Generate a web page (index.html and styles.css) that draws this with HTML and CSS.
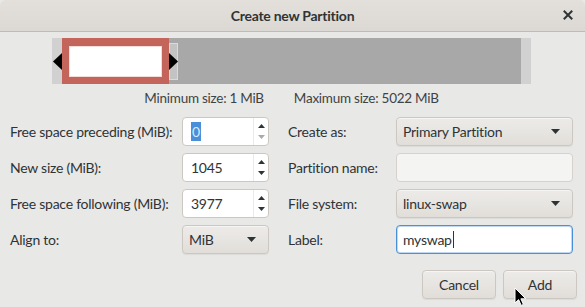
FILE: index.html
```html
<!DOCTYPE html>
<html lang="en">
<head>
<meta charset="utf-8">
<title>Create new Partition</title>
<link rel="stylesheet" href="styles.css">
</head>
<body>
<div class="window">
  <header class="titlebar">
    <span class="title">Create new Partition</span>
    <span class="close">
      <svg width="10" height="10" viewBox="0 0 10 10"><path d="M1.5 1.5 L8.5 8.5 M8.5 1.5 L1.5 8.5" stroke="#2e3436" stroke-width="2" stroke-linecap="square"/></svg>
    </span>
  </header>
  <main class="content">
    <div class="partbar">
      <div class="pb-edge"></div>
      <div class="pb-part"></div>
      <div class="pb-rest"></div>
      <div class="pb-edge pb-edge-right"></div>
      <div class="pb-handle"></div>
      <svg class="pb-arrow pb-arrow-left" width="9" height="17" viewBox="0 0 9 17"><path d="M9 0 L0 8.5 L9 17 Z" fill="#000"/></svg>
      <svg class="pb-arrow pb-arrow-right" width="9" height="17" viewBox="0 0 9 17"><path d="M0 0 L9 8.5 L0 17 Z" fill="#000"/></svg>
    </div>
    <div class="sizes">
      <span>Minimum size: 1 MiB</span>
      <span>Maximum size: 5022 MiB</span>
    </div>
    <div class="form">
      <label class="lbl">Free space preceding (MiB):</label>
      <div class="spin">
        <span class="spin-text"><span class="sel">0</span></span>
        <span class="spin-btns">
          <svg width="7" height="4" viewBox="0 0 7 4"><path d="M0 4 L3.5 0 L7 4 Z" fill="#2e3436"/></svg>
          <svg width="7" height="4" viewBox="0 0 7 4"><path d="M0 0 L3.5 4 L7 0 Z" fill="#a9abab"/></svg>
        </span>
      </div>
      <span class="gap"></span>
      <label class="lbl">Create as:</label>
      <div class="combo"><span>Primary Partition</span><svg width="9" height="5" viewBox="0 0 9 5"><path d="M0 0 L4.5 5 L9 0 Z" fill="#2e3436"/></svg></div>

      <label class="lbl">New size (MiB):</label>
      <div class="spin">
        <span class="spin-text">1045</span>
        <span class="spin-btns">
          <svg width="7" height="4" viewBox="0 0 7 4"><path d="M0 4 L3.5 0 L7 4 Z" fill="#2e3436"/></svg>
          <svg width="7" height="4" viewBox="0 0 7 4"><path d="M0 0 L3.5 4 L7 0 Z" fill="#2e3436"/></svg>
        </span>
      </div>
      <span class="gap"></span>
      <label class="lbl">Partition name:</label>
      <div class="entry entry-disabled"></div>

      <label class="lbl">Free space following (MiB):</label>
      <div class="spin">
        <span class="spin-text">3977</span>
        <span class="spin-btns">
          <svg width="7" height="4" viewBox="0 0 7 4"><path d="M0 4 L3.5 0 L7 4 Z" fill="#2e3436"/></svg>
          <svg width="7" height="4" viewBox="0 0 7 4"><path d="M0 0 L3.5 4 L7 0 Z" fill="#2e3436"/></svg>
        </span>
      </div>
      <span class="gap"></span>
      <label class="lbl">File system:</label>
      <div class="combo"><span>linux-swap</span><svg width="9" height="5" viewBox="0 0 9 5"><path d="M0 0 L4.5 5 L9 0 Z" fill="#2e3436"/></svg></div>

      <label class="lbl">Align to:</label>
      <div class="combo combo-small"><span>MiB</span><svg width="9" height="5" viewBox="0 0 9 5"><path d="M0 0 L4.5 5 L9 0 Z" fill="#2e3436"/></svg></div>
      <span class="gap"></span>
      <label class="lbl">Label:</label>
      <div class="entry entry-focus"><span>myswap</span><span class="caret"></span></div>
    </div>
    <div class="buttons">
      <button class="btn">Cancel</button>
      <button class="btn">Add</button>
    </div>
  </main>
  <svg class="pointer" width="13" height="20" viewBox="0 0 13 20"><path d="M1 1 L1 16 L4.6 12.6 L7.2 18.4 L9.4 17.4 L6.9 11.8 L11.8 11.8 Z" fill="#000" stroke="#fff" stroke-width="1" stroke-linejoin="round"/></svg>
</div>
</body>
</html>
```
FILE: styles.css
```css
html, body {
  margin: 0;
  padding: 0;
  background: #e8e8e7;
}
body {
  font-family: Lato, "Noto Sans", sans-serif;
  font-size: 14px;
  letter-spacing: -0.25px;
  color: #2e3436;
}
.window {
  position: relative;
  width: 585px;
  height: 307px;
  overflow: hidden;
  background: #e8e8e7;
}
.titlebar {
  height: 31px;
  border-bottom: 1px solid #c1bbb5;
  background: linear-gradient(#e3e0dc, #dcd8d3);
  border-radius: 6px 6px 0 0;
  display: flex;
  align-items: center;
  justify-content: center;
  position: relative;
}
.title {
  font-weight: bold;
  font-size: 14px;
  color: #2e3436;
}
.close {
  position: absolute;
  right: 12px;
  top: 10px;
  width: 10px;
  height: 10px;
  display: flex;
}
.content {
  padding-top: 6px;
}
.partbar {
  position: relative;
  margin-left: 52px;
  width: 479px;
  height: 46px;
  display: flex;
  background: #a8a8a8;
}
.pb-edge {
  width: 10px;
  background: #d1d1d1;
}
.pb-part {
  width: 107px;
  box-sizing: border-box;
  border: 7px solid #c4655b;
  border-top-width: 8px;
  background: #fff;
  box-shadow: inset 0 0 0 1px #f3dcd9;
}
.pb-rest {
  flex: 1;
  background: #a8a8a8;
}
.pb-handle {
  position: absolute;
  left: 117px;
  top: 5px;
  width: 9px;
  height: 37px;
  box-sizing: border-box;
  border: 1px solid #dadada;
  background: #c3c3c3;
}
.pb-arrow {
  position: absolute;
  top: 15px;
}
.pb-arrow-left { left: 1px; }
.pb-arrow-right { left: 117px; }
.sizes {
  display: flex;
  justify-content: center;
  gap: 30px;
  margin-top: 5px;
  height: 18px;
  line-height: 18px;
  font-size: 13.5px;
  color: #3d4345;
  padding-right: 2px;
}
.form {
  display: grid;
  grid-template-columns: 172px 87px 19px 108px 177px;
  grid-auto-rows: 29px;
  row-gap: 7px;
  margin-top: 10px;
  padding-left: 10px;
}
.lbl {
  display: flex;
  align-items: center;
}
.spin, .entry, .combo {
  box-sizing: border-box;
  border: 1px solid #cdc7c2;
  border-radius: 4px;
  display: flex;
  align-items: center;
}
.spin {
  background: #fff;
}
.spin-text {
  flex: 1;
  padding-left: 8px;
}
.sel {
  background: #4a8fd9;
  color: #dce9f8;
  padding: 1px 1px;
}
.spin-btns {
  width: 14px;
  align-self: stretch;
  border-left: 1px solid #ece9e6;
  display: flex;
  flex-direction: column;
  justify-content: space-around;
  align-items: center;
  padding: 3px 0;
}
.spin-btns svg { display: block; }
.combo {
  background: linear-gradient(#edebe9, #e1ded9);
  justify-content: space-between;
  padding: 0 12px 0 6px;
  box-shadow: inset 0 1px #f6f5f4, 0 1px 1px rgba(0,0,0,0.06);
}
.combo-small {
  padding-left: 6px;
  padding-right: 12px;
}
.entry {
  background: #fff;
  padding-left: 6px;
}
.entry-disabled {
  background: #f4f4f3;
  border-color: #d6d1cd;
}
.entry-focus {
  border-color: #4a90d9;
  box-shadow: inset 0 0 0 1px rgba(74,144,217,0.35);
}
.caret {
  width: 1px;
  height: 17px;
  background: #2e3436;
  margin-left: 1px;
}
.buttons {
  display: flex;
  justify-content: flex-end;
  gap: 7px;
  margin-top: 16px;
  padding-right: 8px;
}
.btn {
  font-family: inherit;
  font-size: 14px;
  letter-spacing: -0.25px;
  color: #2e3436;
  width: 74px;
  height: 29px;
  box-sizing: border-box;
  border: 1px solid #cdc7c2;
  border-radius: 4px;
  background: linear-gradient(#edebe9, #e1ded9);
  box-shadow: inset 0 1px #f6f5f4, 0 1px 1px rgba(0,0,0,0.06);
  padding: 0;
}
.pointer {
  position: absolute;
  left: 514px;
  top: 287px;
}
```
